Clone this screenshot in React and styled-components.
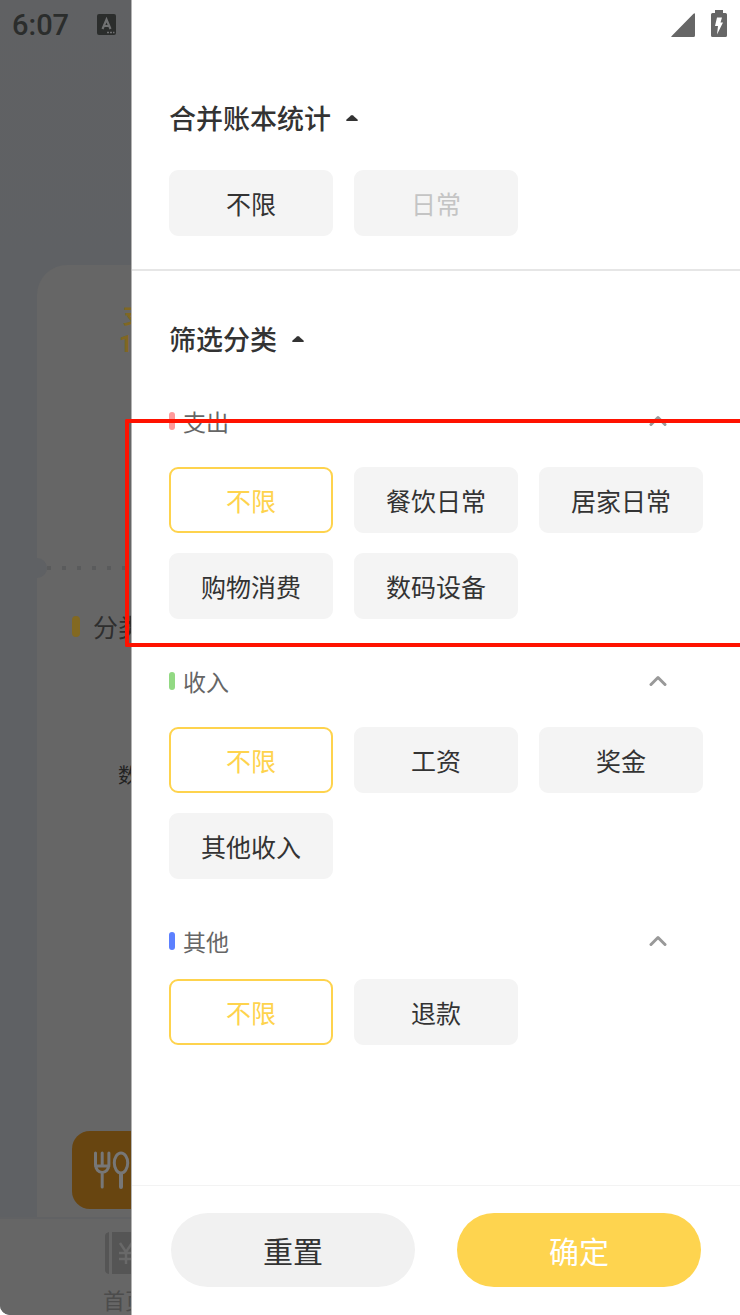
import React, { useState } from 'react';
import styled, { createGlobalStyle } from 'styled-components';

const GlobalStyle = createGlobalStyle`
  *, *::before, *::after { box-sizing: border-box; }
  body {
    margin: 0;
    background: #fff;
    font-family: 'Noto Sans CJK SC', sans-serif;
    color: #333;
  }
  button { font: inherit; color: inherit; border: 0; padding: 0; background: none; cursor: pointer; }
  h2, h3, p { margin: 0; font-weight: 400; }
  svg { display: block; flex: none; }
`;

const Screen = styled.div`
  display: flex;
  min-height: 100vh;
`;

/* Dimmed page behind the drawer */
const Backdrop = styled.div`
  flex: 0 0 131px;
  display: flex;
  flex-direction: column;
  overflow: hidden;
  white-space: nowrap;
  background: linear-gradient(#606163, #5f6164 260px);
  border-bottom-left-radius: 10px;
`;

const StatusBar = styled.div`
  display: flex;
  height: 50px;
`;

const ClockBar = styled(StatusBar)`
  align-items: center;
  gap: 28px;
  padding-left: 12px;
  color: #2b2d2c;
`;

const Clock = styled.span`
  font-family: Roboto, sans-serif;
  font-size: 29px;
  line-height: 52px;
  font-weight: 500;
`;

const Card = styled.section`
  flex: 1;
  margin: 215px 0 0 37px;
  padding-top: 34px;
  background: #666;
  border-top-left-radius: 30px;
`;

const Summary = styled.div`
  height: 259px;
  padding-left: 82px;
  color: #816722;
`;

const SummaryLabel = styled.p`
  padding-left: 4px;
  font-size: 22px;
  line-height: 29px;
  font-weight: 700;
`;

const SummaryAmount = styled.p`
  font-family: Roboto, sans-serif;
  font-size: 24px;
  line-height: 32px;
  font-weight: 700;
`;

const Perforation = styled.div`
  display: flex;
  align-items: center;
  gap: 11px;
  height: 20px;

  &::before {
    content: '';
    width: 10px;
    height: 20px;
    margin-right: -11px;
    border-radius: 0 10px 10px 0;
    background: #5f6164;
  }
`;

const Dot = styled.i`
  flex: none;
  width: 4px;
  height: 4px;
  background: #5a5b5c;
`;

const LegendRow = styled.div`
  display: flex;
  align-items: center;
  gap: 13px;
  margin-top: 32px;
  padding-left: 35px;
  font-size: 25px;
  line-height: 32px;
  color: #2e2e2e;
`;

const LegendMark = styled.i`
  flex: none;
  width: 8px;
  height: 21px;
  border-radius: 4px;
  background: #836921;
`;

const ChartLabel = styled.p`
  margin-top: 119px;
  padding-left: 81px;
  font-size: 20px;
  line-height: 28px;
  color: #222;
`;

const CategoryTile = styled.div`
  display: flex;
  align-items: center;
  height: 78px;
  margin: 342px 0 8px 35px;
  padding-left: 21px;
  background: #684510;
  border-radius: 18px 0 0 18px;
`;

const TabBar = styled.nav`
  display: flex;
  flex-direction: column;
  gap: 10px;
  height: 98px;
  padding: 12px 0 0 103px;
  border-top: 2px solid #616264;
  background: #666;
  font-size: 22px;
  line-height: 28px;
  color: #4c4c4c;
`;

/* Filter drawer */
const Drawer = styled.main`
  flex: 1;
  min-width: 0;
  display: flex;
  flex-direction: column;
  border-left: 1px solid #b4b4b4;
  background: #fff;
`;

const DeviceBar = styled(StatusBar)`
  align-items: flex-end;
  justify-content: flex-end;
  gap: 16px;
  padding: 0 13px 13px 0;
`;

const Section = styled.section`
  padding: 48px 37px 33px;

  & + & { border-top: 2px solid #e6e6e6; }
`;

const Filters = styled.div`
  flex: 1;
`;

const SectionToggle = styled.button`
  display: flex;
  align-items: center;
  gap: 15px;
  font-size: 27px;
  line-height: 40px;
  font-weight: 500;
`;

const SectionHead = styled.h2`
  margin-bottom: ${(p) => (p.$loose ? 46 : 32)}px;
`;

const GroupList = styled.div`
  display: flex;
  flex-direction: column;
  gap: 46px;
`;

const Group = styled.section`
  position: relative;
  display: flex;
  flex-direction: column;
  gap: ${(p) => (p.$compact ? 22 : 30)}px;
`;

const GroupToggle = styled.button`
  display: flex;
  align-items: center;
  gap: 8px;
  width: 100%;
  padding-right: 36px;
  font-size: 23px;
  line-height: 32px;
  color: #666;
`;

const GroupMark = styled.i`
  width: 6px;
  height: 18px;
  border-radius: 3px;
  background: ${(p) => p.$color};
`;

const GroupName = styled.span`
  flex: 1;
  text-align: left;
`;

const ChipGrid = styled.div`
  display: grid;
  grid-template-columns: repeat(3, 1fr);
  gap: 20px 21px;
`;

const Chip = styled.button`
  height: 66px;
  border: 2px solid ${(p) => (p.$selected ? '#fed34d' : '#f4f4f4')};
  border-radius: 9px;
  background: ${(p) => (p.$selected ? '#fff' : '#f4f4f4')};
  color: ${(p) => (p.$selected ? '#fed34d' : '#333')};
  font-size: 25px;
  line-height: 32px;

  &:disabled { color: #c4c4c4; cursor: default; }
`;

const Highlight = styled.div`
  position: absolute;
  top: 14px;
  right: -37px;
  bottom: -28px;
  left: -44px;
  border: 4px solid #ff1200;
  border-right: 0;
  border-radius: 2px 0 0 2px;
  pointer-events: none;
`;

const Footer = styled.footer`
  display: flex;
  gap: 42px;
  padding: 27px 39px 28px;
  border-top: 1px solid #f3f3f3;
`;

const Action = styled.button`
  flex: 1;
  height: 74px;
  border-radius: 37px;
  background: ${(p) => (p.$primary ? '#fed44f' : '#f1f1f1')};
  color: ${(p) => (p.$primary ? '#fff' : '#333')};
  font-size: 30px;
  line-height: 40px;
`;

const KeyboardIcon = () => (
  <svg width="20" height="22" viewBox="0 0 20 22" aria-hidden="true">
    <rect width="19" height="21" rx="2" fill="#2b2d2c" />
    <path d="M5.500 15 9.500 5.500 13.500 15M7 12h5" fill="none" stroke="#707172" strokeWidth="2.200" />
    <path d="M10 18.500h2M13 18.500h2M16 18.500h1.500" stroke="#707172" strokeWidth="1.500" />
  </svg>
);

const SignalIcon = () => (
  <svg width="24" height="24" viewBox="0 0 24 24" aria-hidden="true">
    <path d="M24 1v21.500q0 1.500-1.500 1.500H1.200q-1.500 0-.5-1L22.500 .8Q24-.5 24 1Z" fill="#666" />
  </svg>
);

const BatteryIcon = () => (
  <svg width="16" height="27" viewBox="0 0 16 27" aria-hidden="true">
    <path d="M4 0h8v3H14.500q1.500 0 1.500 1.500v21q0 1.500-1.500 1.500H1.500q-1.500 0-1.500-1.500V4.500q0-1.500 1.500-1.500H4Z" fill="#666" />
    <path d="M6 7.500h5l-1.500 5H12L6 24.500 7 16H4Z" fill="#fff" />
  </svg>
);

const CutleryIcon = () => (
  <svg width="38" height="38" viewBox="0 0 38 38" fill="none" stroke="#777" strokeWidth="3" strokeLinecap="round" aria-hidden="true">
    <path d="M2.500 2v12a6.700 7.500 0 0 0 13.400 0V2M9.200 2v13M2.500 15h13.400M9.200 22v14" />
    <ellipse cx="28" cy="12" rx="6.700" ry="10" />
    <path d="M28 23v13" strokeWidth="4" />
  </svg>
);

const LedgerIcon = () => (
  <svg width="44" height="44" viewBox="0 0 44 44" aria-hidden="true">
    <path d="M6 1v42q-4-1-4-4V5q0-3 4-4ZM9 1h33v42H9Z" fill="#555" />
    <path d="m17 12 6 9 6-9M16 22h14M16 28h14M23 21v12" fill="none" stroke="#696969" strokeWidth="2.500" />
  </svg>
);

const Caret = () => (
  <svg width="12" height="8" viewBox="0 0 12 8" aria-hidden="true">
    <path d="M5 1.400q1-.9 2 0l4.500 4.100q1 1.300-.5 1.500H1q-1.500-.2-.5-1.500Z" fill="#333" />
  </svg>
);

const Chevron = () => (
  <svg width="18" height="12" viewBox="0 0 18 12" aria-hidden="true">
    <path d="m2 9.500 7-7 7 7" fill="none" stroke="#999" strokeWidth="3" strokeLinecap="round" strokeLinejoin="round" />
  </svg>
);

const GROUPS = [
  { name: '支出', color: '#ff9a9a', items: ['不限', '餐饮日常', '居家日常', '购物消费', '数码设备'], highlighted: true },
  { name: '收入', color: '#92d983', items: ['不限', '工资', '奖金', '其他收入'] },
  { name: '其他', color: '#5c80ff', items: ['不限', '退款'], compact: true },
];

function FilterGroup({ name, color, items, compact, highlighted }) {
  const [selected, setSelected] = useState(items[0]);
  return (
    <Group $compact={compact} aria-label={name}>
      <h3>
        <GroupToggle type="button" aria-expanded="true">
          <GroupMark $color={color} />
          <GroupName>{name}</GroupName>
          <Chevron />
        </GroupToggle>
      </h3>
      <ChipGrid>
        {items.map((item) => (
          <Chip
            key={item}
            type="button"
            aria-pressed={item === selected}
            $selected={item === selected}
            onClick={() => setSelected(item)}
          >
            {item}
          </Chip>
        ))}
      </ChipGrid>
      {highlighted && <Highlight />}
    </Group>
  );
}

export default function App() {
  return (
    <>
      <GlobalStyle />
      <Screen>
        <Backdrop>
          <ClockBar>
            <Clock>6:07</Clock>
            <KeyboardIcon />
          </ClockBar>
          <Card>
            <Summary>
              <SummaryLabel>支出</SummaryLabel>
              <SummaryAmount>1</SummaryAmount>
            </Summary>
            <Perforation>
              {Array.from({ length: 6 }, (_, i) => <Dot key={i} />)}
            </Perforation>
            <LegendRow>
              <LegendMark />
              <span>分类</span>
            </LegendRow>
            <ChartLabel>数码</ChartLabel>
            <CategoryTile>
              <CutleryIcon />
            </CategoryTile>
          </Card>
          <TabBar>
            <LedgerIcon />
            <span>首页</span>
          </TabBar>
        </Backdrop>

        <Drawer>
          <DeviceBar>
            <SignalIcon />
            <BatteryIcon />
          </DeviceBar>
          <Filters>
            <Section>
              <SectionHead>
                <SectionToggle type="button" aria-expanded="true">
                  合并账本统计
                  <Caret />
                </SectionToggle>
              </SectionHead>
              <ChipGrid>
                <Chip type="button">不限</Chip>
                <Chip type="button" disabled>日常</Chip>
              </ChipGrid>
            </Section>
            <Section>
              <SectionHead $loose>
                <SectionToggle type="button" aria-expanded="true">
                  筛选分类
                  <Caret />
                </SectionToggle>
              </SectionHead>
              <GroupList>
                {GROUPS.map((group) => <FilterGroup key={group.name} {...group} />)}
              </GroupList>
            </Section>
          </Filters>
          <Footer>
            <Action type="button">重置</Action>
            <Action type="button" $primary>确定</Action>
          </Footer>
        </Drawer>
      </Screen>
    </>
  );
}
